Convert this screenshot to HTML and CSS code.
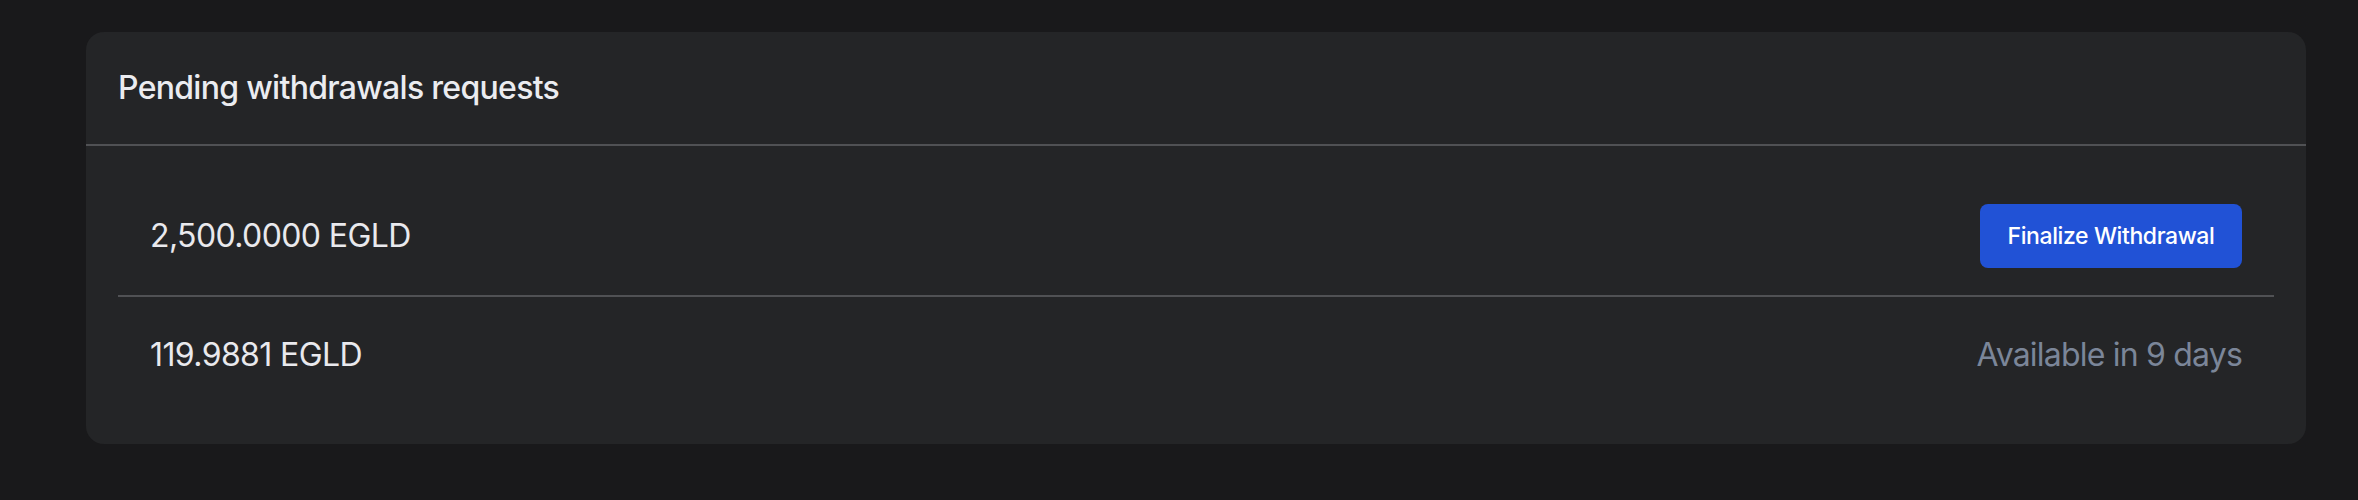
FILE: index.html
```html
<!DOCTYPE html>
<html lang="en">
<head>
<meta charset="utf-8">
<title>Pending withdrawals</title>
<link rel="stylesheet" href="styles.css">
</head>
<body>
  <section class="card">
    <header class="card-header">
      <h2 class="card-title">Pending withdrawals requests</h2>
    </header>
    <div class="card-body">
      <div class="row">
        <span class="amount">2,500.0000 EGLD</span>
        <button class="btn-primary" type="button">Finalize Withdrawal</button>
      </div>
      <div class="row">
        <span class="amount">119.9881 EGLD</span>
        <span class="status">Available in 9 days</span>
      </div>
    </div>
  </section>
</body>
</html>
```

FILE: styles.css
```css
* { box-sizing: border-box; }

html, body {
  margin: 0;
  background: #19191b;
}

body {
  padding: 32px 52px 0 86px;
  font-family: Inter, "Noto Sans", "Liberation Sans", sans-serif;
  color: #e9e9ed;
}

.card {
  background: #242527;
  border-radius: 18px;
  overflow: hidden;
}

.card-header {
  padding: 32px 32px;
  border-bottom: 2px solid #505154;
}

.card-title {
  margin: 0;
  font-size: 32px;
  line-height: 48px;
  font-weight: 550;
  letter-spacing: -0.7px;
  color: #ebecf0;
}

.card-body {
  padding: 31px 32px 31px;
}

.row {
  display: flex;
  align-items: center;
  justify-content: space-between;
  height: 118px;
  padding: 0 32px;
}

.row + .row {
  border-top: 2px solid #505154;
}

.amount {
  font-size: 32px;
  line-height: 48px;
  letter-spacing: -0.6px;
  color: #e9e9ed;
}

.status {
  font-size: 32px;
  line-height: 48px;
  letter-spacing: -0.8px;
  color: #7b8699;
}

.btn-primary {
  height: 64px;
  width: 262px;
  border: 0;
  border-radius: 8px;
  background: #2152d6;
  color: #ffffff;
  font-family: inherit;
  font-size: 23px;
  font-weight: 500;
  letter-spacing: -0.4px;
  white-space: nowrap;
  padding: 0;
}
```
